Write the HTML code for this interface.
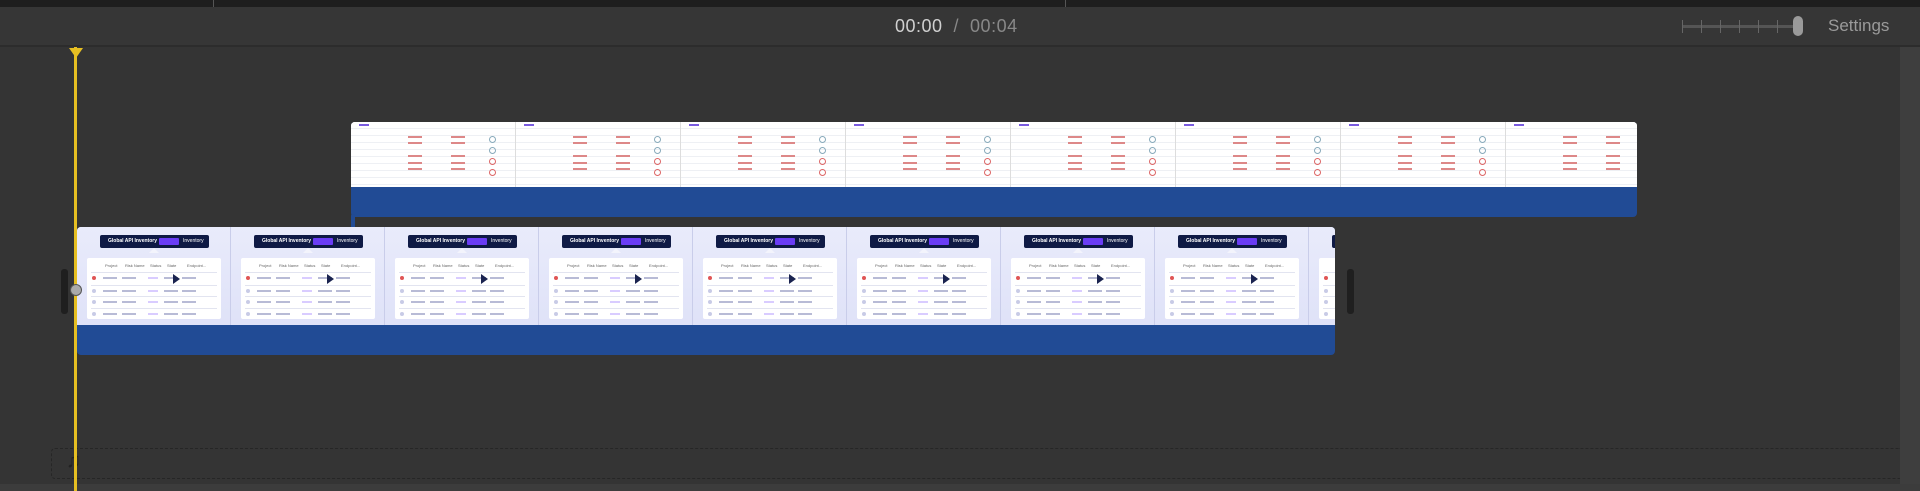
<!DOCTYPE html>
<html><head><style>
*{margin:0;padding:0;box-sizing:border-box}
body{width:1920px;height:491px;background:#343434;position:relative;overflow:hidden;font-family:"Liberation Sans",sans-serif}
.abs{position:absolute}
.bf{position:absolute;top:0;width:154px;height:98px;background:linear-gradient(#e9ebfb,#dfe2f8);border-right:1px solid #c9cdea}
.pill{position:absolute;left:23px;top:8px;width:109px;height:13px;background:#0f1a45;border-radius:2px;color:#fff;font-size:5px;font-weight:bold;line-height:13px;padding-left:8px}
.pill i{position:absolute;left:59px;top:3px;width:20px;height:7px;background:#6a3cf5;border-radius:1px}
.pill b{position:absolute;left:83px;font-weight:normal}
.tri{position:absolute;left:72px;top:21px;border:5px solid transparent;border-bottom-color:#f3f4fc;border-top:0}
.card{position:absolute;left:10px;top:31px;width:134px;height:61px;background:#fff;border-radius:2px}
.row{position:absolute;left:4px;right:4px;height:1px;background:#e2e4f0}
.t{position:absolute;height:2px;background:#b8bbd6}
.hd{position:absolute;top:5px;font-size:4px;color:#666}
.tf{position:absolute;top:0;width:165px;height:65px;background:#fff;border-right:1px solid #ddd;
background-image:repeating-linear-gradient(#fff 0 6px,#eef0f4 6px 7px);}
.tf .r{position:absolute;height:2px;width:14px;background:#d88}
.tf .c{position:absolute;width:7px;height:7px;border-radius:50%;border:1px solid #8ab}
</style></head><body>
<div class="abs" style="left:0;top:0;width:1920px;height:7px;background:#1e1e1e"></div>
<div class="abs" style="left:213px;top:0;width:1px;height:14px;background:#555"></div>
<div class="abs" style="left:1065px;top:0;width:1px;height:14px;background:#555"></div>
<div class="abs" style="left:0;top:7px;width:1920px;height:39px;background:#363636"></div>
<div class="abs" style="left:0;top:45px;width:1920px;height:2px;background:#2c2c2c"></div>
<div class="abs" style="left:895px;top:16px;font-size:18px;color:#d0d0d0;letter-spacing:0.5px">00:00 <span style="color:#888">&nbsp;/&nbsp; 00:04</span></div>
<div class="abs" style="left:1682px;top:25px;width:112px;height:3px;background:#555"></div>
<div class="abs" style="left:1682px;top:20px;width:1px;height:13px;background:#666;box-shadow:19px 0 #666,38px 0 #666,57px 0 #666,76px 0 #666,95px 0 #666"></div>
<div class="abs" style="left:1793px;top:16px;width:10px;height:20px;background:#9a9a9a;border-radius:5px"></div>
<div class="abs" style="left:1828px;top:16px;font-size:17px;color:#9a9a9a">Settings</div>
<div class="abs" style="left:1900px;top:47px;width:20px;height:444px;background:#3e3e3e"></div>

<div class="abs" style="left:351px;top:122px;width:1286px;height:95px;background:#214b95;border-radius:4px;overflow:hidden">
 <div class="abs" style="left:0;top:0;width:1286px;height:65px;background:#fff" id="tc"></div>
</div>
<div class="abs" style="left:351px;top:214px;width:4px;height:18px;background:#214b95;border-radius:2px"></div>

<div class="abs" style="left:77px;top:227px;width:1258px;height:128px;background:#214b95;border-radius:4px;overflow:hidden">
 <div class="abs" style="left:0;top:0;width:1258px;height:98px;background:#e4e7fa" id="bc"></div>
</div>
<div class="abs" style="left:61px;top:269px;width:7px;height:45px;background:#1f1f1f;border-radius:3px"></div>
<div class="abs" style="left:1347px;top:269px;width:7px;height:45px;background:#1f1f1f;border-radius:3px"></div>

<div class="abs" style="left:51px;top:448px;width:1849px;height:31px;border:1px dashed #262626;border-right:none;border-radius:4px 0 0 4px"></div>
<div class="abs" style="left:66px;top:450px;font-size:20px;color:#222">♫</div>
<div class="abs" style="left:0;top:484px;width:1920px;height:7px;background:#3c3c3c"></div>

<div class="abs" style="left:74px;top:47px;width:3px;height:444px;background:#e6bf22"></div>
<div class="abs" style="left:69px;top:48px;border:7px solid transparent;border-top:10px solid #e6bf22;border-bottom:0"></div>
<div class="abs" style="left:70px;top:284px;width:12px;height:12px;border-radius:50%;background:#aaa;border:1px solid #555"></div>

<script>
var bc=document.getElementById('bc'),h='';
for(var i=0;i<9;i++){
 var rows='';
 [14,27,38,50].forEach(function(y){rows+='<div class="row" style="top:'+y+'px"></div>'});
 var tx='';
 ['Project','Risk Name','Status','State','Endpoint...'].forEach(function(s,j){tx+='<div class="hd" style="left:'+[18,38,63,80,100][j]+'px">'+s+'</div>'});
 [20,33,44,56].forEach(function(y,k){[16,35,61,77,95].forEach(function(x,j){tx+='<div class="t" style="top:'+(y-1)+'px;left:'+x+'px;width:'+(j==2?10:14)+'px;'+(j==2?'background:#d9ccff':'')+'"></div>'});tx+='<div class="abs" style="left:5px;top:'+(y-2)+'px;width:4px;height:4px;border-radius:50%;background:'+(k==0?'#e05555':'#c8cbe6')+'"></div>'});
 h+='<div class="bf" style="left:'+(i*154)+'px"><div class="pill">Global API Inventory<i></i><b>Inventory</b></div><div class="tri"></div><div class="card">'+rows+tx+'<div class="abs" style="left:86px;top:16px;border:5px solid transparent;border-left:7px solid #1a2350;border-right:0"></div></div></div>';
}
bc.innerHTML=h;
var tc=document.getElementById('tc'),g='';
for(var i=0;i<8;i++){
 var s='<div class="abs" style="left:8px;top:2px;width:10px;height:2px;background:#7a5ce0"></div>';
 [14,20,33,40,46].forEach(function(y){s+='<div class="r" style="left:57px;top:'+y+'px"></div><div class="r" style="left:100px;top:'+y+'px"></div>'});
 [14,25,36,47].forEach(function(y,k){s+='<div class="c" style="left:138px;top:'+y+'px;'+(k>1?'border-color:#d66':'')+'"></div>'});
 g+='<div class="tf" style="left:'+(i*165)+'px">'+s+'</div>';
}
tc.innerHTML=g;
</script>
</body></html>
